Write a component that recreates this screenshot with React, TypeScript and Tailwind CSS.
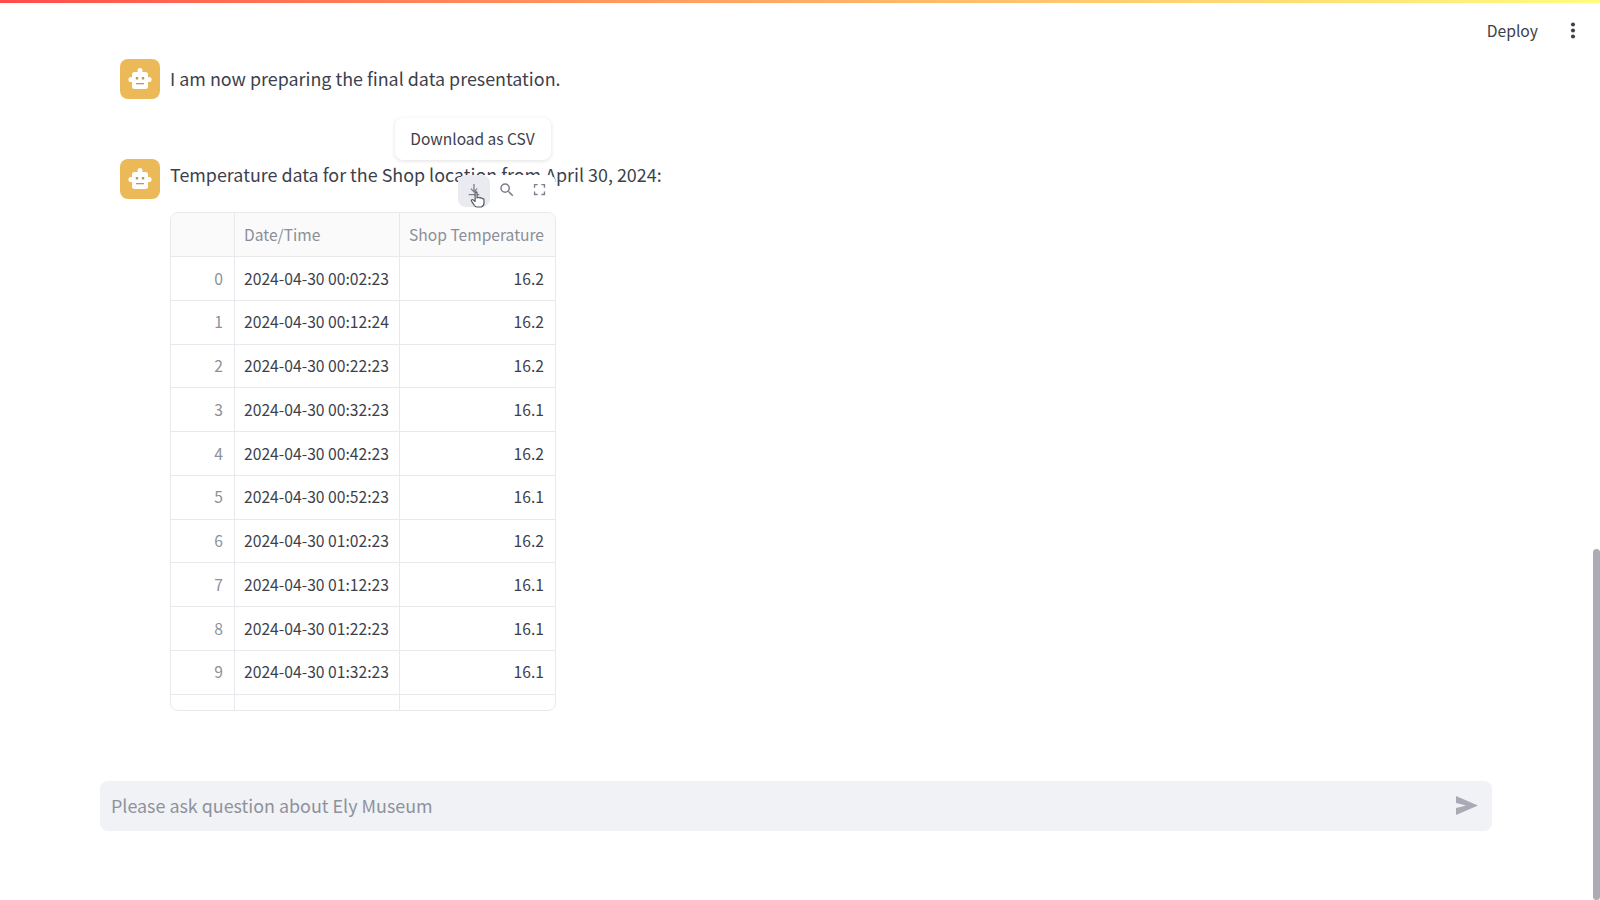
const dates = [
  ["2024-04-30 00:02:23", "16.2"],
  ["2024-04-30 00:12:24", "16.2"],
  ["2024-04-30 00:22:23", "16.2"],
  ["2024-04-30 00:32:23", "16.1"],
  ["2024-04-30 00:42:23", "16.2"],
  ["2024-04-30 00:52:23", "16.1"],
  ["2024-04-30 01:02:23", "16.2"],
  ["2024-04-30 01:12:23", "16.1"],
  ["2024-04-30 01:22:23", "16.1"],
  ["2024-04-30 01:32:23", "16.1"],
];

function Avatar() {
  return (
    <div className="flex h-10 w-10 shrink-0 items-center justify-center rounded-lg bg-[#ecb959]">
      <svg viewBox="0 0 24 24" className="h-6 w-6">
        <circle cx="12" cy="3.500" r="2.500" fill="#ffffff" />
        <circle cx="3" cy="12.500" r="2.600" fill="#ffffff" />
        <circle cx="21" cy="12.500" r="2.600" fill="#ffffff" />
        <rect x="4" y="5" width="16" height="17" rx="2.500" fill="#ffffff" />
        <rect x="7.800" y="10" width="2.400" height="2.600" rx="0.600" fill="#b59a63" />
        <rect x="13.800" y="10" width="2.400" height="2.600" rx="0.600" fill="#b59a63" />
        <rect x="8" y="16" width="8" height="1.300" fill="#b59a63" />
      </svg>
    </div>
  );
}

function Toolbar() {
  return (
    <div className="absolute left-[338px] top-[16px] flex h-8 w-[98px] items-center rounded-lg bg-white">
      <div className="relative flex h-8 w-8 items-center justify-center rounded-lg bg-[#e9ebf0] pb-[3px]">
        <svg viewBox="0 0 24 24" className="h-4 w-4" fill="#7d808c">
          <path d="M11 3h2v9.200l3-3 1.400 1.400L12 16l-5.400-5.400L8 9.200l3 3V3zM4 18h16v2H4z" />
        </svg>
        <svg viewBox="0 0 24 24" className="absolute left-[10px] top-[15px] h-[19px] w-[19px]" fill="#ffffff" stroke="#55575f" strokeWidth="1.500" strokeLinejoin="round">
          <path d="M9 3.500c0-1.400 2.400-1.400 2.400 0V10l1-.2c.4-1 2.200-.8 2.400.3l.6.1c.6-.8 2.200-.5 2.300.6l.5.1c.9-.3 2 .2 2 1.400v4.200c0 2.400-1.600 4.500-3.600 5H11c-1.600 0-2.400-1-3.200-2.200L4.500 14c-.9-1.400 1-2.600 2.100-1.600L9 14.500z" />
        </svg>
      </div>
      <div className="flex h-8 w-[33px] items-center justify-center pb-[3px]">
        <svg viewBox="0 0 24 24" className="h-[18px] w-[18px]" fill="#7d808c">
          <path d="M15.500 14h-.79l-.28-.27A6.470 6.470 0 0 0 16 9.500 6.500 6.500 0 1 0 9.500 16c1.610 0 3.090-.590 4.230-1.570l.27.280v.790l5 4.990L20.490 19l-4.990-5zm-6 0C7.010 14 5 11.990 5 9.500S7.010 5 9.500 5 14 7.010 14 9.500 11.990 14 9.500 14z" />
        </svg>
      </div>
      <div className="flex h-8 w-[33px] items-center justify-center pb-[3px]">
        <svg viewBox="0 0 24 24" className="h-[15px] w-[15px]" fill="#7d808c">
          <path d="M3 3h6v2.200H5.200V9H3V3zm12 0h6v6h-2.200V5.200H15V3zM3 15h2.200v3.800H9V21H3v-6zm15.800 0H21v6h-6v-2.200h3.800V15z" />
        </svg>
      </div>
    </div>
  );
}

function DataTable() {
  return (
    <div className="mt-[21px] w-[386px] overflow-hidden rounded-lg border border-[#e8e9ed] text-[15.700px] leading-none">
      <div className="flex h-[44px] border-b border-[#e8e9ed] bg-[#fafafb] text-[15.600px] text-[#8b8e98]">
        <div className="w-[64px] border-r border-[#e8e9ed]" />
        <div className="flex w-[165px] items-center border-r border-[#e8e9ed] px-[9px]">Date/Time</div>
        <div className="flex flex-1 items-center justify-end pr-[11px] whitespace-nowrap">Shop Temperature</div>
      </div>
      {dates.map(([d, v], i) => (
        <div key={i} className="flex h-[43.750px] border-b border-[#e8e9ed] text-[#3d3f4b]">
          <div className="flex w-[64px] items-center justify-end border-r border-[#e8e9ed] pr-[11px] text-[#8f9199]">{i}</div>
          <div className="flex w-[165px] items-center border-r border-[#e8e9ed] px-[9px] whitespace-nowrap">{d}</div>
          <div className="flex flex-1 items-center justify-end pr-[11px]">{v}</div>
        </div>
      ))}
      <div className="flex h-[15px]">
        <div className="w-[64px] border-r border-[#e8e9ed]" />
        <div className="w-[165px] border-r border-[#e8e9ed]" />
      </div>
    </div>
  );
}

export default function App() {
  return (
    <div className="relative flex h-[900px] w-[1600px] flex-col overflow-hidden bg-white font-['Noto_Sans_CJK_JP',sans-serif] text-[#3d3f4b]">
      <div className="h-[3px] bg-gradient-to-r from-[#ff4b4b] to-[#fffd80]" />
      <header className="flex h-[55px] items-center justify-end gap-[32px] pr-[24px] text-[15.700px]">
        <span>Deploy</span>
        <svg viewBox="0 0 6 20" className="h-[17px] w-[6px]" fill="#3d3f4b">
          <circle cx="3" cy="3" r="2.400" />
          <circle cx="3" cy="10" r="2.400" />
          <circle cx="3" cy="17" r="2.400" />
        </svg>
      </header>
      <main className="flex flex-1 flex-col pl-[120px]">
        <div className="mt-[1px] flex h-[40px] items-center gap-[10px] text-[17.900px] leading-none">
          <Avatar />
          <span>I am now preparing the final data presentation.</span>
        </div>
        <div className="relative mt-[60px] flex gap-[10px]">
          <Avatar />
          <div>
            <div className="h-[32px] pt-[7px] text-[17.900px] leading-none whitespace-nowrap">Temperature data for the Shop location from April 30, 2024:</div>
            <DataTable />
          </div>
          <div className="absolute left-[275px] top-[-41px] flex h-[42px] w-[156px] items-center justify-center rounded-lg bg-white pr-[1px] text-[15.500px] shadow-[0_1px_4px_rgba(0,0,0,0.12)]">Download as CSV</div>
          <Toolbar />
        </div>
      </main>
      <div className="mx-[100px] mb-[69px] flex h-[50px] w-[1392px] items-center justify-between rounded-lg bg-[#f0f2f6] pb-[2px] pl-[11px] pr-[14px] text-[17.900px] text-[#8f919b]">
        <span>Please ask question about Ely Museum</span>
        <svg viewBox="0 0 22 19" className="h-[19px] w-[22px]" fill="#a9aab6">
          <path d="M0 0 22 9.500 0 19V12L10 9.500 0 7z" />
        </svg>
      </div>
      <div className="absolute bottom-0 right-0 h-[351px] w-[7px] rounded-full bg-[#abacb4]" />
    </div>
  );
}
